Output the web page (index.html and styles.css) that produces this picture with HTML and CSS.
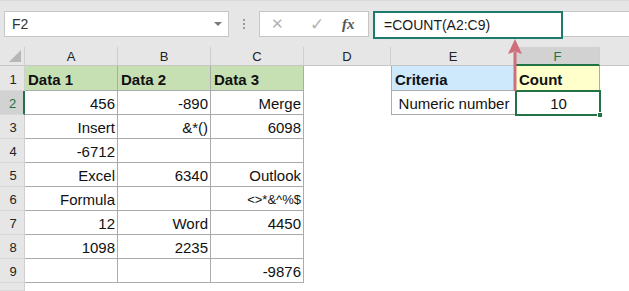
FILE: index.html
```html
<!DOCTYPE html>
<html>
<head>
<meta charset="utf-8">
<link rel="stylesheet" href="styles.css">
</head>
<body>
<div class="app">
  <div class="toolbar">
    <div class="namebox"><span>F2</span><span class="dd"></span></div>
    <div class="sep"><i></i><i></i><i></i></div>
    <div class="btns">
      <span class="btn x">✕</span>
      <span class="btn ok">✓</span>
      <span class="btn fx">fx</span>
    </div>
    <div class="fbar"><div class="fbox">=COUNT(A2:C9)</div></div>
  </div>
  <div class="sheet">
    <div class="corner"><span class="tri"></span></div>
    <div class="ch">A</div><div class="ch">B</div><div class="ch">C</div><div class="ch">D</div><div class="ch">E</div><div class="ch sel">F</div><div class="ch last"></div>

    <div class="rh">1</div>
    <div class="c g b l">Data 1</div><div class="c g b l">Data 2</div><div class="c g b l">Data 3</div>
    <div class="e"></div><div class="c blue b l">Criteria</div><div class="c yel b l">Count</div><div class="e"></div>

    <div class="rh rsel">2</div>
    <div class="c first2">456</div><div class="c">-890</div><div class="c">Merge</div>
    <div class="e"></div><div class="c ctr t2">Numeric number</div><div class="c ctr f2">10<span class="handle"></span></div><div class="e"></div>

    <div class="rh">3</div>
    <div class="c">Insert</div><div class="c">&amp;*()</div><div class="c">6098</div>
    <div class="e"></div><div class="e"></div><div class="e"></div><div class="e"></div>

    <div class="rh">4</div>
    <div class="c">-6712</div><div class="c"></div><div class="c"></div>
    <div class="e"></div><div class="e"></div><div class="e"></div><div class="e"></div>

    <div class="rh">5</div>
    <div class="c">Excel</div><div class="c">6340</div><div class="c">Outlook</div>
    <div class="e"></div><div class="e"></div><div class="e"></div><div class="e"></div>

    <div class="rh">6</div>
    <div class="c">Formula</div><div class="c"></div><div class="c sm">&lt;&gt;*&amp;^%$</div>
    <div class="e"></div><div class="e"></div><div class="e"></div><div class="e"></div>

    <div class="rh">7</div>
    <div class="c">12</div><div class="c">Word</div><div class="c">4450</div>
    <div class="e"></div><div class="e"></div><div class="e"></div><div class="e"></div>

    <div class="rh">8</div>
    <div class="c">1098</div><div class="c">2235</div><div class="c"></div>
    <div class="e"></div><div class="e"></div><div class="e"></div><div class="e"></div>

    <div class="rh">9</div>
    <div class="c"></div><div class="c"></div><div class="c">-9876</div>
    <div class="e"></div><div class="e"></div><div class="e"></div><div class="e"></div>

    <div class="rh"></div>
    <div class="e"></div><div class="e"></div><div class="e"></div><div class="e"></div><div class="e"></div><div class="e"></div><div class="e"></div>
  </div>
  <svg class="arrow" width="16" height="56" viewBox="0 0 16 56">
    <path d="M8 13 V52" stroke="#cf6f7c" stroke-width="3" fill="none"/>
    <path d="M8 0 L15 15 L8 12.5 L1 15 Z" fill="#cf6f7c"/>
  </svg>
</div>
</body>
</html>
```
FILE: styles.css
```css
* { box-sizing: border-box; margin: 0; padding: 0; }
html, body { width: 629px; height: 291px; overflow: hidden; background: #fff; }
body { font-family: "Liberation Sans", Arial, sans-serif; }
.app { position: relative; width: 629px; height: 291px; overflow: hidden; }

.toolbar {
  height: 47px;
  background: #e6e6e6;
  border-top: 1px solid #d9d9d9;
  display: flex;
  align-items: flex-start;
  padding-top: 10px;
  padding-left: 4px;
}
.namebox {
  width: 225px; height: 26px;
  background: #fff;
  border: 1px solid #c6c6c6;
  display: flex; align-items: center; justify-content: space-between;
  padding: 0 6px 0 7px;
  font-size: 14px; color: #333;
}
.dd { width: 0; height: 0; border-left: 4px solid transparent; border-right: 4px solid transparent; border-top: 4px solid #7a7a7a; }
.sep { width: 30px; height: 26px; display: flex; flex-direction: column; align-items: center; justify-content: center; gap: 2px; }
.sep i { display: block; width: 2px; height: 2px; background: #9c9c9c; }
.btns {
  width: 110px; height: 26px; background: #fff; border: 1px solid #c6c6c6;
  display: flex; align-items: center; padding-left: 11px;
}
.btn { font-size: 16px; color: #b3b3b3; }
.x { width: 39px; font-size: 15px; }
.ok { width: 32px; font-size: 17px; }
.fx { font-family: "Liberation Serif", serif; font-style: italic; color: #555; font-size: 15px; font-weight: bold; }
.fbar {
  flex: 1; height: 26px; margin-left: 4px; background: #fff; border: 1px solid #c6c6c6; border-right: none;
  position: relative;
}
.fbox {
  position: absolute; left: -1px; top: -1px; width: 190px; height: 28px;
  border: 2px solid #1e7b6c;
  font-size: 14px; color: #1a1a1a;
  display: flex; align-items: center; padding-left: 9px;
  background: #fff;
}

.sheet {
  display: grid;
  grid-template-columns: 25px 93px 93px 93px 87px 125px 84px 1fr;
  grid-template-rows: 19px 25px repeat(8, 24px) 8px;
  font-family: "Liberation Sans", Arial, sans-serif;
}
.corner { background: #e6e6e6; border-right: 1px solid #d0d0d0; border-bottom: 1px solid #c6c6c6; position: relative; }
.tri { position: absolute; right: 3px; bottom: 3px; width: 0; height: 0; border-left: 12px solid transparent; border-bottom: 12px solid #b6b6b6; }
.ch {
  background: #e6e6e6; border-right: 1px solid #cfcfcf; border-bottom: 1px solid #c6c6c6;
  font-size: 13px; color: #222; display: flex; align-items: center; justify-content: center;
  padding-top: 1px;
}
.ch.sel { background: #d2d2d2; color: #217346; border-bottom: 2px solid #217346; }
.ch.last { border-right: none; }
.rh {
  background: #e6e6e6; border-right: 1px solid #cfcfcf; border-bottom: 1px solid #d8d8d8;
  font-size: 13px; color: #222; display: flex; align-items: flex-end; justify-content: center;
  padding-bottom: 3px; padding-left: 2px;
}
.rh.rsel { background: #d2d2d2; color: #217346; border-right: 2px solid #217346; }
.c {
  border-right: 1px solid #ababab; border-bottom: 1px solid #ababab;
  font-size: 15px; color: #111;
  display: flex; align-items: flex-end; justify-content: flex-end;
  padding: 0 2px 2px 3px; white-space: nowrap; position: relative;
}
.c.sm { font-size: 13px; padding-bottom: 3px; }
.c.l { justify-content: flex-start; font-weight: bold; font-size: 15px; }
.c.g { background: #c6e0b4; }
.c.blue { background: #cde9fb; border-left: 1px solid #ababab; }
.c.yel { background: #ffffcc; }
.c.ctr { justify-content: center; }
.c.t2 { border-left: 1px solid #ababab; }
.c.f2 { border: 2px solid #217346; margin: -1px 0 0 -1px; width: calc(100% + 2px); height: calc(100% + 2px); padding-bottom: 2px; }
.handle { position: absolute; right: -4px; bottom: -4px; width: 6px; height: 6px; background: #217346; border: 1px solid #fff; }
.e { background: #fff; }

.arrow { position: absolute; left: 507px; top: 39px; }
```
